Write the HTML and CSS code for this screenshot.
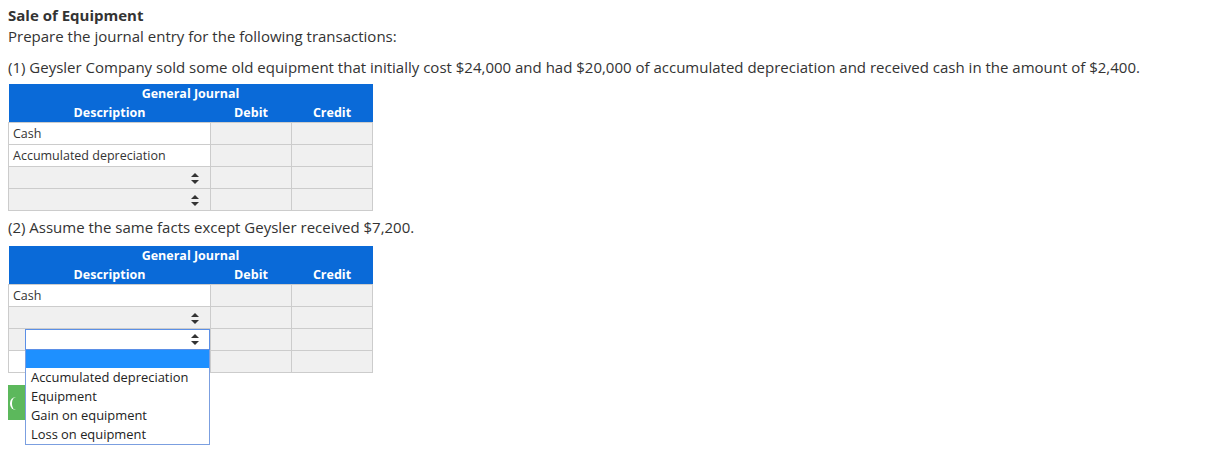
FILE: index.html
```html
<!DOCTYPE html>
<html>
<head>
<meta charset="utf-8">
<link rel="stylesheet" href="styles.css">
</head>
<body>
<div class="title">Sale of Equipment</div>
<div class="intro">Prepare the journal entry for the following transactions:</div>
<p class="q q1">(1) Geysler Company sold some old equipment that initially cost $24,000 and had $20,000 of accumulated depreciation and received cash in the amount of $2,400.</p>
<table class="gj">
  <thead>
    <tr><th colspan="3" class="gjt">General Journal</th></tr>
    <tr><th class="cd">Description</th><th class="cn">Debit</th><th class="cn">Credit</th></tr>
  </thead>
  <tbody>
    <tr><td class="txt">Cash</td><td class="num"></td><td class="num"></td></tr>
    <tr><td class="txt">Accumulated depreciation</td><td class="num"></td><td class="num"></td></tr>
    <tr><td class="sel"><span class="arr"></span></td><td class="num"></td><td class="num"></td></tr>
    <tr><td class="sel"><span class="arr"></span></td><td class="num"></td><td class="num"></td></tr>
  </tbody>
</table>
<p class="q q2">(2) Assume the same facts except Geysler received $7,200.</p>
<div class="wrap">
<table class="gj">
  <thead>
    <tr><th colspan="3" class="gjt">General Journal</th></tr>
    <tr><th class="cd">Description</th><th class="cn">Debit</th><th class="cn">Credit</th></tr>
  </thead>
  <tbody>
    <tr><td class="txt">Cash</td><td class="num"></td><td class="num"></td></tr>
    <tr><td class="sel"><span class="arr"></span></td><td class="num"></td><td class="num"></td></tr>
    <tr><td class="sel indent"><div class="open"><span class="arr"></span></div></td><td class="num"></td><td class="num"></td></tr>
    <tr><td class="txt"></td><td class="num"></td><td class="num"></td></tr>
  </tbody>
</table>
<div class="btn"><span class="glyph"></span></div>
<div class="list">
  <div class="opt hl"></div>
  <div class="opt">Accumulated depreciation</div>
  <div class="opt">Equipment</div>
  <div class="opt">Gain on equipment</div>
  <div class="opt">Loss on equipment</div>
</div>
</div>
</body>
</html>
```
FILE: styles.css
```css
html, body { min-height: 440px; }
body {
  margin: 5px 8px;
  font-family: "Open Sans", "DejaVu Sans", sans-serif;
  color: #333;
  background: #fff;
}
.title {
  font-weight: bold;
  font-size: 15px;
  line-height: 21px;
}
.intro {
  font-size: 15px;
  line-height: 21px;
}
.q {
  font-size: 15px;
  line-height: 21px;
  margin: 0;
}
.q1 { margin-top: 10px; margin-bottom: 6px; }
.q2 { margin-top: 6px; margin-bottom: 8px; }
.gj {
  border-collapse: collapse;
  font-size: 12.5px;
  width: 365px;
}
.gj th {
  background: #0a6ad8;
  color: #fff;
  font-weight: bold;
  padding: 0;
  height: 19px;
  line-height: 19px;
  text-align: center;
}
.cd { width: 202px; }
.cn { width: 81px; }
.gj td {
  border: 1px solid #ccc;
  height: 21px;
  padding: 0;
}
.gj thead th { border: none; }
.txt { background: #fff; padding-left: 4px !important; color: #333; }
.num { background: #f0f0f0; }
.sel { background: #f0f0f0; position: relative; }
.arr {
  position: absolute;
  right: 11px;
  top: 6px;
  width: 8px;
  height: 11px;
}
.arr::before, .arr::after {
  content: "";
  position: absolute;
  left: 0;
  border-left: 4px solid transparent;
  border-right: 4px solid transparent;
}
.arr::before { top: 0; border-bottom: 4px solid #333; }
.arr::after { bottom: 0; border-top: 4px solid #333; }
.indent { padding-left: 16px !important; }
.open {
  position: relative;
  border: 1px solid #5b8fe6;
  background: #fff;
  box-sizing: border-box;
  height: 21px;
}
.open .arr { right: 10px; top: 4px; }
.wrap { position: relative; padding-bottom: 30px; }
.btn {
  margin-top: 12px;
  width: 70px;
  height: 35px;
  background: #5cb85c;
  position: relative;
}
.glyph {
  position: absolute;
  left: 2px;
  top: 12px;
  width: 6px;
  height: 13px;
  border-left: 2px solid #fff;
  border-radius: 6px 0 0 6px;
  box-sizing: border-box;
}
.list {
  position: absolute;
  left: 17px;
  top: 104px;
  width: 185px;
  border: 1px solid #7b9fe0;
  border-top: none;
  background: #fff;
  box-sizing: border-box;
  font-size: 12.9px;
  color: #222;
}
.opt {
  height: 19px;
  line-height: 19px;
  padding-left: 5px;
}
.opt.hl {
  background: #1e90ff;
  height: 18px;
}
```
